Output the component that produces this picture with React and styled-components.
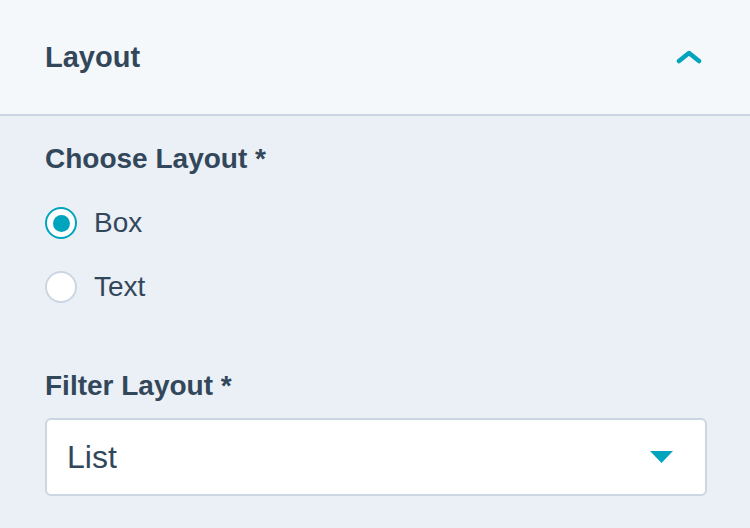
import styled, { createGlobalStyle } from "styled-components";

const GlobalStyle = createGlobalStyle`
  body {
    margin: 0;
    background-color: #eaf0f6;
    font-family: "Liberation Sans", Arial, sans-serif;
    color: #33475b;
  }
`;

const Panel = styled.div`
  width: 750px;
  height: 528px;
  background-color: #eaf0f6;
  overflow: hidden;
`;

const Header = styled.div`
  height: 114px;
  display: flex;
  align-items: center;
  justify-content: space-between;
  padding: 0 48px 0 45px;
  background-color: #f5f8fa;
  border-bottom: 2px solid #cbd6e2;
`;

const Title = styled.h2`
  margin: 0;
  font-size: 29px;
  font-weight: 700;
  line-height: 36px;
`;

const Toggle = styled.button`
  border: none;
  background: none;
  padding: 0;
  display: flex;
  cursor: pointer;
`;

const Body = styled.div`
  padding: 25px 43px 0 45px;
`;

const Label = styled.div`
  font-size: 28px;
  font-weight: 700;
  line-height: 36px;
  margin-bottom: ${({ $gap }) => $gap}px;
`;

const RadioList = styled.div`
  display: flex;
  flex-direction: column;
  gap: 32px;
  margin-bottom: 65px;
`;

const RadioRow = styled.label`
  display: flex;
  align-items: center;
  gap: 17px;
  font-size: 28px;
  line-height: 32px;
  cursor: pointer;
`;

const RadioDot = styled.span`
  box-sizing: border-box;
  width: 32px;
  height: 32px;
  border-radius: 50%;
  background-color: #fff;
  border: 2px solid ${({ $checked }) => ($checked ? "#00a4bd" : "#cbd6e2")};
  display: flex;
  align-items: center;
  justify-content: center;
  &::after {
    content: "";
    width: 17px;
    height: 17px;
    border-radius: 50%;
    background-color: #00a4bd;
    display: ${({ $checked }) => ($checked ? "block" : "none")};
  }
`;

const Select = styled.div`
  box-sizing: border-box;
  height: 78px;
  display: flex;
  align-items: center;
  justify-content: space-between;
  padding: 0 32px 0 20px;
  background-color: #fff;
  border: 2px solid #cbd6e2;
  border-radius: 6px;
  font-size: 32px;
  cursor: pointer;
`;

const Caret = () => (
  <svg width="23" height="12" viewBox="0 0 23 12">
    <polygon points="0,0 23,0 11.5,12" fill="#00a4bd" />
  </svg>
);

const Chevron = () => (
  <svg width="26" height="14" viewBox="0 0 26 14">
    <path
      d="M3 11 L13 3 L23 11"
      fill="none"
      stroke="#00a4bd"
      strokeWidth="4.5"
      strokeLinecap="round"
      strokeLinejoin="round"
    />
  </svg>
);

const options = [
  { label: "Box", checked: true },
  { label: "Text", checked: false },
];

const App = () => {
  return (
    <>
      <GlobalStyle />
      <Panel>
        <Header>
          <Title>Layout</Title>
          <Toggle>
            <Chevron />
          </Toggle>
        </Header>
        <Body>
          <Label $gap={30}>Choose Layout *</Label>
          <RadioList>
            {options.map((o) => (
              <RadioRow key={o.label}>
                <RadioDot $checked={o.checked} />
                {o.label}
              </RadioRow>
            ))}
          </RadioList>
          <Label $gap={14}>Filter Layout *</Label>
          <Select>
            List
            <Caret />
          </Select>
        </Body>
      </Panel>
    </>
  );
};

export default App;
